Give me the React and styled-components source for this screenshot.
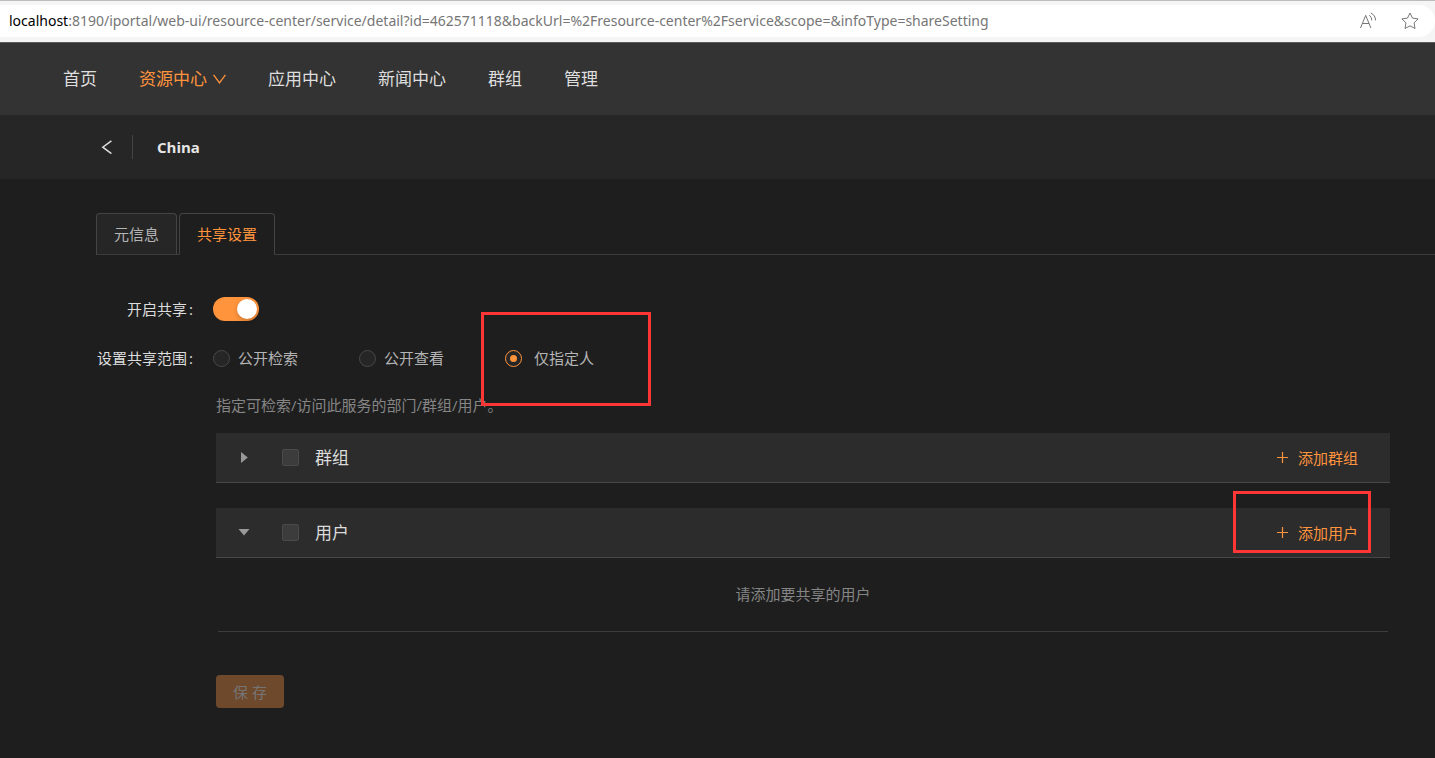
import { useState } from "react";
import styled, { createGlobalStyle } from "styled-components";

const NAV_ITEMS = [
  { text: "首页" },
  { text: "资源中心", active: true },
  { text: "应用中心" },
  { text: "新闻中心" },
  { text: "群组" },
  { text: "管理" },
];

const SCOPES = [
  { value: "search", text: "公开检索" },
  { value: "view", text: "公开查看" },
  { value: "assign", text: "仅指定人", marked: true },
];

const AddressBar = () => {
  return (
    <StyledAddressBar>
      <AddressField>
        <label htmlFor="address">localhost</label>
        <input
          id="address"
          type="text"
          defaultValue=":8190/iportal/web-ui/resource-center/service/detail?id=462571118&backUrl=%2Fresource-center%2Fservice&scope=&infoType=shareSetting"
        />
        <IconButton type="button" aria-label="Read aloud">
          <svg width="18" height="18" viewBox="0 0 18 18">
            <path d="M1.5 16 L6.7 3.4 L11.9 16 M3.4 11.5 H10" />
            <path d="M10.3 3.2 Q12.6 4.8 12.8 8.4 M11.9 1 Q16.4 3.2 16.6 8.4" />
          </svg>
        </IconButton>
        <IconButton type="button" aria-label="Favorite">
          <svg width="18" height="18" viewBox="0 0 18 18">
            <path d="M9 1 L11.5 6.1 L17.1 6.9 L13 10.9 L14 16.5 L9 13.8 L4 16.5 L5 10.9 L0.9 6.9 L6.5 6.1 Z" />
          </svg>
        </IconButton>
      </AddressField>
    </StyledAddressBar>
  );
};

const ShareRow = ({ title, addText, open, marked, onToggle }) => {
  return (
    <StyledShareRow>
      <ArrowButton type="button" aria-label={title} onClick={onToggle}>
        <svg width="12" height="12" viewBox="0 0 12 12">
          <path d={open ? "M0.5 2 H11.5 L6 8.5 Z" : "M3 0 V11 L9.8 5.5 Z"} />
        </svg>
      </ArrowButton>
      <RowCheck>
        <input type="checkbox" />
        {title}
      </RowCheck>
      <AddButton type="button">
        <svg width="11" height="11" viewBox="0 0 11 11">
          <path d="M5.5 0 V11 M0 5.5 H11" />
        </svg>
        {addText}
        {marked && <AddMark />}
      </AddButton>
    </StyledShareRow>
  );
};

const App = () => {
  const [shared, setShared] = useState(true);
  const [scope, setScope] = useState("assign");
  const [groupOpen, setGroupOpen] = useState(false);
  const [userOpen, setUserOpen] = useState(true);

  return (
    <>
      <GlobalStyle />
      <AddressBar />
      <Nav>
        {NAV_ITEMS.map((item) => (
          <NavLink key={item.text} href="#" $active={item.active}>
            {item.text}
            {item.active && (
              <svg width="13" height="10" viewBox="0 0 13 10">
                <path d="M0.6 0.8 L6.5 8.8 L12.4 0.8" />
              </svg>
            )}
          </NavLink>
        ))}
      </Nav>
      <TitleBar>
        <BackButton type="button" aria-label="返回">
          <svg width="12" height="14" viewBox="0 0 12 14">
            <path d="M11.4 0.8 L2.8 7.2 L11.4 13.6" />
          </svg>
        </BackButton>
        <h1>China</h1>
      </TitleBar>
      <main>
        <Tabs role="tablist">
          <Tab type="button" role="tab" aria-selected="false">
            元信息
          </Tab>
          <Tab type="button" role="tab" aria-selected="true" $active>
            共享设置
          </Tab>
        </Tabs>
        <Form onSubmit={(e) => e.preventDefault()}>
          <FormItem>
            <FormLabel htmlFor="share">开启共享</FormLabel>
            <Switch
              id="share"
              type="checkbox"
              role="switch"
              checked={shared}
              onChange={() => setShared(!shared)}
            />
          </FormItem>
          <FormItem role="radiogroup" aria-labelledby="scope">
            <FormLabel as="span" id="scope">
              设置共享范围
            </FormLabel>
            {SCOPES.map((item) => (
              <Option key={item.value} $wide={item.marked}>
                <input
                  type="radio"
                  name="scope"
                  checked={scope === item.value}
                  onChange={() => setScope(item.value)}
                />
                {item.text}
                {item.marked && <OptionMark />}
              </Option>
            ))}
          </FormItem>
          <FormBody>
            <Hint>指定可检索/访问此服务的部门/群组/用户。</Hint>
            <ShareRow
              title="群组"
              addText="添加群组"
              open={groupOpen}
              onToggle={() => setGroupOpen(!groupOpen)}
            />
            <ShareRow
              title="用户"
              addText="添加用户"
              marked
              open={userOpen}
              onToggle={() => setUserOpen(!userOpen)}
            />
            {userOpen && <Empty>请添加要共享的用户</Empty>}
            <SaveButton type="submit" disabled>
              保 存
            </SaveButton>
          </FormBody>
        </Form>
      </main>
    </>
  );
};
export default App;

const GlobalStyle = createGlobalStyle`
  * {
    box-sizing: border-box;
  }
  body {
    margin: 0;
    min-height: 100vh;
    background: #1e1e1e;
    color: #dcdcdc;
    font-family: "Open Sans", "Noto Sans CJK SC", sans-serif;
    font-size: 15px;
    line-height: 24px;
  }
  button,
  input {
    margin: 0;
    padding: 0;
    border: 0;
    background: none;
    color: inherit;
    font: inherit;
  }
  button {
    cursor: pointer;
  }
  svg {
    display: block;
    flex: none;
    fill: none;
    stroke: currentColor;
  }
`;

const StyledAddressBar = styled.header`
  height: 43px;
  padding-top: 4px;
  background: #f5f5f5;
  border-top: 1px solid #bdbbbc;
  border-bottom: 1px solid #5a5a5a;
`;

const AddressField = styled.div`
  display: flex;
  align-items: center;
  height: 32px;
  padding: 0 16px 0 9px;
  border-radius: 0 16px 16px 0;
  background: #fff;
  color: #000;
  font-family: "Noto Sans", sans-serif;
  font-size: 14px;

  input {
    flex: 1;
    min-width: 0;
    color: #767676;
    outline: none;
  }
`;

const IconButton = styled.button`
  margin-left: 24px;
  color: #767676;
`;

const Nav = styled.nav`
  display: flex;
  align-items: center;
  gap: 42px;
  height: 72px;
  padding: 0 63px;
  background: #333;
`;

const NavLink = styled.a`
  display: flex;
  align-items: center;
  gap: 6px;
  color: ${({ $active }) => ($active ? "#ff943d" : "#dedede")};
  font-size: 17px;
  text-decoration: none;

  svg {
    stroke-width: 1.3;
  }
`;

const TitleBar = styled.div`
  display: flex;
  align-items: center;
  height: 64px;
  padding: 0 100px;
  background: #262626;

  h1 {
    margin: 0;
    padding-left: 24px;
    border-left: 1px solid #444;
    color: #e6e6e6;
    font-size: 15px;
    font-weight: 700;
  }
`;

const BackButton = styled.button`
  width: 32px;

  svg {
    stroke-width: 1.5;
  }
`;

const Tabs = styled.div`
  display: flex;
  gap: 2px;
  margin-top: 34px;
  padding-left: 96px;
  background: linear-gradient(#3c3c3c, #3c3c3c) 96px 100% / 100% 1px no-repeat;
`;

const Tab = styled.button`
  height: 42px;
  padding: 0 17px;
  border: 1px solid #444;
  border-bottom-color: ${({ $active }) => ($active ? "#1e1e1e" : "#3c3c3c")};
  border-radius: 4px 4px 0 0;
  background: ${({ $active }) => ($active ? "#1e1e1e" : "#262626")};
  color: ${({ $active }) => ($active ? "#ff943d" : "#b4b4b4")};
`;

const Form = styled.form`
  padding: 42px 45px 48px 96px;
`;

const FormItem = styled.div`
  display: flex;
  align-items: center;
  margin-bottom: 25px;
`;

const FormLabel = styled.label`
  width: 117px;
  padding-right: 20px;
  text-align: right;
  white-space: nowrap;

  &::after {
    content: ":";
    margin-left: 2px;
  }
`;

const Switch = styled.input`
  appearance: none;
  display: flex;
  align-items: center;
  justify-content: ${({ checked }) => (checked ? "flex-end" : "flex-start")};
  width: 46px;
  height: 24px;
  padding: 2px;
  border-radius: 12px;
  background: ${({ checked }) => (checked ? "#ff943d" : "#555")};
  cursor: pointer;

  &::before {
    content: "";
    width: 20px;
    height: 20px;
    border-radius: 50%;
    background: #fff;
    box-shadow: 0 2px 4px rgba(0, 0, 0, 0.2);
  }
`;

const Option = styled.label`
  display: flex;
  align-items: center;
  gap: ${({ $wide }) => ($wide ? "12px" : "8px")};
  position: relative;
  width: 146px;
  color: #b4b4b4;

  input {
    appearance: none;
    display: grid;
    place-items: center;
    width: 17px;
    height: 17px;
    border: 1px solid #484848;
    border-radius: 50%;
    background: #262626;
  }
  input:checked {
    border-color: #ff943d;
  }
  input:checked::before {
    content: "";
    width: 7px;
    height: 7px;
    border-radius: 50%;
    background: #ff943d;
  }
`;

/* red frames drawn over the controls */
const Mark = styled.span`
  position: absolute;
  border: 3px solid #ff3636;
  pointer-events: none;
`;

const OptionMark = styled(Mark)`
  top: -34px;
  left: -24px;
  width: 170px;
  height: 94px;
`;

const AddMark = styled(Mark)`
  top: -30px;
  right: -13px;
  width: 138px;
  height: 62px;
`;

const FormBody = styled.div`
  padding-left: 120px;
`;

const Hint = styled.p`
  margin: 0 0 18px;
  color: #858585;
  line-height: 20px;
`;

const StyledShareRow = styled.div`
  display: flex;
  align-items: center;
  height: 50px;
  margin-bottom: 25px;
  padding: 0 32px 0 22px;
  border-bottom: 1px solid #484848;
  background: #2c2c2c;
`;

const ArrowButton = styled.button`
  display: flex;
  justify-content: center;
  width: 12px;
  color: #999;

  svg {
    fill: currentColor;
    stroke: none;
  }
`;

const RowCheck = styled.label`
  display: flex;
  align-items: center;
  gap: 16px;
  margin-left: 32px;
  font-size: 17px;

  input {
    appearance: none;
    width: 17px;
    height: 17px;
    border: 1px solid #4a4a4a;
    border-radius: 2px;
    background: #3c3c3c;
  }
  input:checked {
    background: #ff943d;
  }
`;

const AddButton = styled.button`
  display: flex;
  align-items: center;
  gap: 10px;
  position: relative;
  margin-left: auto;
  color: #ff943d;

  svg {
    stroke-width: 1.2;
  }
`;

const Empty = styled.p`
  margin: 0 2px;
  padding-bottom: 26px;
  border-bottom: 1px solid #3c3c3c;
  color: #858585;
  line-height: 22px;
  text-align: center;
`;

const SaveButton = styled.button`
  height: 33px;
  margin-top: 43px;
  padding: 0 17px;
  border-radius: 4px;
  background: #6f492c;
  color: #757575;
  cursor: not-allowed;
`;
